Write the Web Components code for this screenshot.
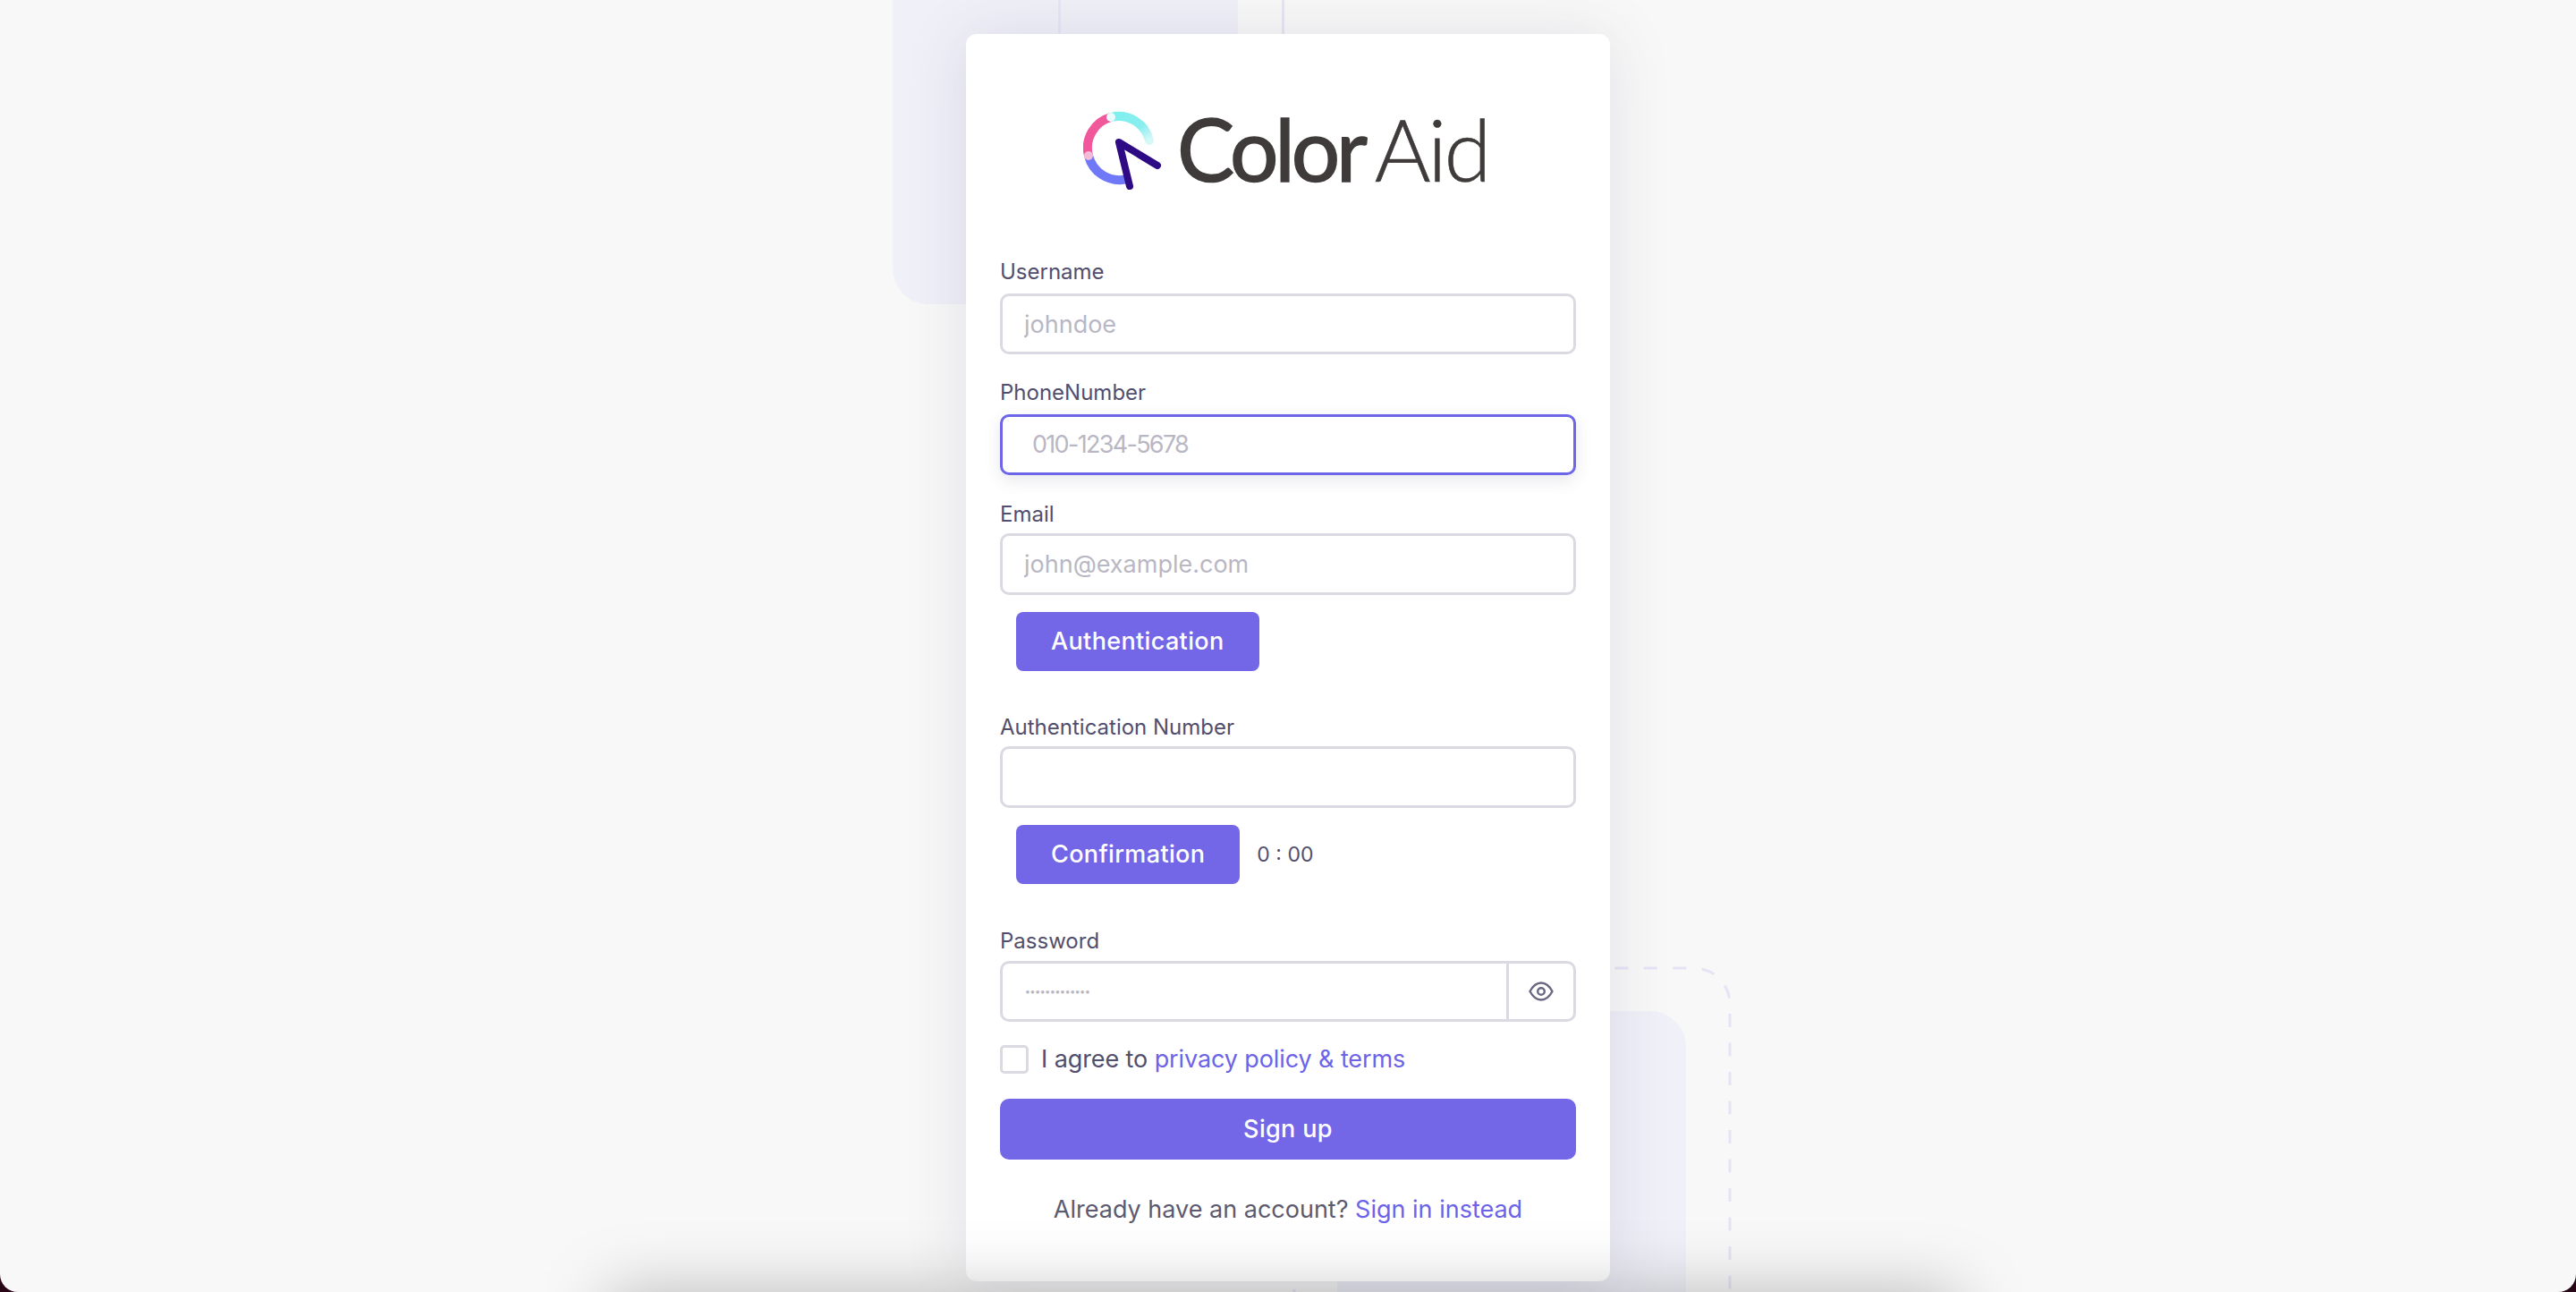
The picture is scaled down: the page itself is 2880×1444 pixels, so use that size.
<!DOCTYPE html>
<html lang="en">
<head>
<meta charset="utf-8">
<title>Color Aid - Sign up</title>
<style>
  html, body { margin: 0; height: 100%; overflow: hidden; background: #2a0716; }
</style>
</head>
<body>
<signup-page>
  <signup-card>
    <brand-logo></brand-logo>
    <text-field label="Username" placeholder="johndoe" style="margin-bottom: 27.5px"></text-field>
    <text-field label="PhoneNumber" placeholder="010-1234-5678" focused style="--placeholder-spacing: -1.7px"></text-field>
    <text-field label="Email" placeholder="john@example.com" style="--label-gap: 6px; --input-height: 69px; margin-bottom: 25.5px"></text-field>
    <action-row><action-button>Authentication</action-button></action-row>
    <text-field class="after-row" label="Authentication Number" style="--label-gap: 6px; --input-height: 69px; margin-bottom: 25.5px"></text-field>
    <action-row timer="0 : 00"><action-button>Confirmation</action-button></action-row>
    <password-field class="after-row-wide" label="Password" placeholder="·············" style="--label-gap: 7.5px"></password-field>
    <agree-check>I agree to <a href="#">privacy policy &amp; terms</a></agree-check>
    <action-button block>Sign up</action-button>
    <signin-note>Already have an account? <a href="#">Sign in instead</a></signin-note>
  </signup-card>
</signup-page>

<script>
const fieldStyles = `
  :host { padding-top: calc(9px - var(--label-gap, 9px)); }
  label { display: block; font-size: 24px; line-height: 30px; color: #524e6e; margin-bottom: var(--label-gap, 9px); }
  input { display: block; width: 100%; box-sizing: border-box; height: var(--input-height, 68px); padding: 0 24px;
    border: 3px solid #dbdae2; border-radius: 10px; outline: none; background: #fff;
    font: 400 27px Inter, sans-serif; color: #524e6e; }
  input::placeholder { color: #b9b7c4; opacity: 1; letter-spacing: var(--placeholder-spacing, 0); }
`;

class SignupPage extends HTMLElement {
  constructor() {
    super();
    this.attachShadow({ mode: 'open' }).innerHTML = `
      <style>
        :host { display: block; position: relative; height: 100vh; overflow: hidden; background: #f8f8f8;
          border-radius: 0 0 20px 20px; font-family: Inter, sans-serif; }
        .main { position: relative; display: flex; justify-content: center; padding-top: 38px; }
        .solid, .lines { position: absolute; box-sizing: border-box; border-radius: 40px; }
        .solid { background: #f0f0f8; }
        .top-solid { left: 998px; top: -200px; width: 386px; height: 540px; }
        .top-lines { left: 1183px; top: -300px; width: 253px; height: 500px; border: 3px solid #e6e5f6; }
        .bottom-solid { left: 1495px; top: 1130px; width: 390px; height: 500px; }
        .bottom-dashes { position: absolute; left: 1440px; top: 1070px; width: 500px; height: 374px; }
        .bottom-dashes path { fill: none; stroke: #e5e4f5; stroke-width: 3; stroke-dasharray: 15 17.5; }
        .bottom-shade { position: absolute; left: 680px; right: 690px; top: 1446px; height: 100px;
          background: rgba(0,0,0,.26); filter: blur(38px); pointer-events: none; }
      </style>
      <div class="solid top-solid"></div>
      <div class="lines top-lines"></div>
      <div class="solid bottom-solid"></div>
      <svg class="bottom-dashes" viewBox="0 0 500 374">
        <path d="M494 63V374"/>
        <path d="M494 63V52A40 40 0 0 0 454 12H47A40 40 0 0 0 7 52V374" stroke-dashoffset="-17.5"/>
      </svg>
      <div class="main"><slot></slot></div>
      <div class="bottom-shade"></div>
    `;
  }
}

class SignupCard extends HTMLElement {
  constructor() {
    super();
    this.attachShadow({ mode: 'open' }).innerHTML = `
      <style>
        :host { display: block; box-sizing: border-box; width: 720px; height: 1394px; padding: 0 38px;
          background: #fff; border-radius: 12px; box-shadow: 0 4px 70px rgba(67,64,100,.13); }
        ::slotted(.after-row) { margin-top: 45px; }
        ::slotted(.after-row-wide) { margin-top: 47px; }
      </style>
      <slot></slot>
    `;
  }
}

class BrandLogo extends HTMLElement {
  constructor() {
    super();
    this.attachShadow({ mode: 'open' }).innerHTML = `
      <style>
        :host { display: flex; align-items: flex-start; box-sizing: border-box; height: 251px; padding: 86px 0 0 93px; gap: 15px; }
        svg { width: 90px; height: 90px; flex: none; }
        .name { margin-top: -6px; font-family: Lato, sans-serif; font-size: 96px; line-height: 96px; color: #3f3b3a; white-space: nowrap; }
        .name b { font-weight: 400; letter-spacing: -4.2px; -webkit-text-stroke: 1.5px #3f3b3a; }
        .name span { font-weight: 300; letter-spacing: -3px; margin-left: 12px; -webkit-text-stroke: .6px #3f3b3a; }
      </style>
      <svg viewBox="0 0 90 90" fill="none" stroke-width="10">
        <defs>
          <linearGradient id="teal" x1="0" y1="0" x2="1" y2="1">
            <stop offset="0" stop-color="#7fefee"/><stop offset=".6" stop-color="#8aeeee"/><stop offset="1" stop-color="#d8f8f8"/>
          </linearGradient>
        </defs>
        <path d="M31 7A35.500 35.500 0 0 1 74 33" stroke="url(#teal)" stroke-linecap="round"/>
        <path d="M31 7A35.500 35.500 0 0 0 6 50" stroke="#f0589b"/>
        <path d="M6 50A35.500 35.500 0 0 0 47 76.500" stroke="#6f78f7"/>
        <circle cx="31" cy="7" r="5" fill="#e9fbfc"/>
        <circle cx="6" cy="50" r="5" fill="#f2bcd8"/>
        <path d="M52 84L40 35L83 61" stroke="#2f0a85" stroke-width="8" stroke-linecap="round" stroke-linejoin="round"/>
      </svg>
      <div class="name"><b>Color</b><span>Aid</span></div>
    `;
  }
}

class TextField extends HTMLElement {
  constructor() {
    super();
    const focused = this.hasAttribute('focused');
    this.attachShadow({ mode: 'open' }).innerHTML = `
      <style>
        :host { display: block; margin-bottom: 26.5px; }
        ${fieldStyles}
        input.focused { border-color: #6e66e8; padding-left: 33px; box-shadow: 0 6px 18px rgba(67,64,100,.12); }
      </style>
      <label></label>
      <input type="text" class="${focused ? 'focused' : ''}">
    `;
    this.shadowRoot.querySelector('label').textContent = this.getAttribute('label');
    this.shadowRoot.querySelector('input').placeholder = this.getAttribute('placeholder') || '';
  }
}

class PasswordField extends HTMLElement {
  constructor() {
    super();
    this.attachShadow({ mode: 'open' }).innerHTML = `
      <style>
        :host { display: block; margin-bottom: 26px; --placeholder-spacing: -2.2px; }
        ${fieldStyles}
        .group { display: flex; }
        input { flex: 1; min-width: 0; border-right: 0; border-radius: 10px 0 0 10px; }
        .eye { display: flex; align-items: center; justify-content: center; width: 78px; height: 68px; box-sizing: border-box;
          border: 3px solid #dbdae2; border-radius: 0 10px 10px 0; }
        svg { width: 30px; height: 30px; }
      </style>
      <label></label>
      <div class="group">
        <input type="text">
        <span class="eye">
          <svg viewBox="0 0 30 30" fill="none" stroke="#6a6780" stroke-width="2.400">
            <path d="M2.500 15C6 8.500 10 5.500 15 5.500S24 8.500 27.500 15C24 21.500 20 24.500 15 24.500S6 21.500 2.500 15Z" stroke-linejoin="round"/>
            <circle cx="15" cy="15" r="3.800"/>
          </svg>
        </span>
      </div>
    `;
    this.shadowRoot.querySelector('label').textContent = this.getAttribute('label');
    this.shadowRoot.querySelector('input').placeholder = this.getAttribute('placeholder') || '';
  }
}

class ActionRow extends HTMLElement {
  constructor() {
    super();
    const timer = this.getAttribute('timer');
    this.attachShadow({ mode: 'open' }).innerHTML = `
      <style>
        :host { display: flex; align-items: center; gap: 19px; margin: -6.5px 0 0 18px; }
        span { font-size: 23px; color: #524e6e; }
      </style>
      <slot></slot>
      ${timer ? `<span>${timer}</span>` : ''}
    `;
  }
}

class ActionButton extends HTMLElement {
  constructor() {
    super();
    this.attachShadow({ mode: 'open' }).innerHTML = `
      <style>
        :host { display: inline-block; }
        :host([block]) { display: block; }
        button { display: block; width: 100%; height: 66px; padding: 0 39px 2px; border: 0; border-radius: 8px; background: #7367e8;
          color: #fff; font: 500 27px Inter, sans-serif; letter-spacing: .35px; }
        :host([block]) button { height: 68px; border-radius: 10px; }
      </style>
      <button type="button"><slot></slot></button>
    `;
  }
}

class AgreeCheck extends HTMLElement {
  constructor() {
    super();
    this.attachShadow({ mode: 'open' }).innerHTML = `
      <style>
        :host { display: flex; align-items: center; gap: 14px; height: 32px; margin-bottom: 28px; font-size: 27px; letter-spacing: -.1px; color: #524e6e; }
        i { display: block; box-sizing: border-box; width: 32px; height: 32px; border: 3px solid #dbdae2; border-radius: 5px; }
        div { padding-bottom: 2px; }
        ::slotted(a) { color: #6c63e8; text-decoration: none; }
      </style>
      <i></i>
      <div><slot></slot></div>
    `;
  }
}

class SigninNote extends HTMLElement {
  constructor() {
    super();
    this.attachShadow({ mode: 'open' }).innerHTML = `
      <style>
        :host { display: block; margin-top: 38px; text-align: center; font-size: 27px; line-height: 36px; color: #5d5a70; }
        ::slotted(a) { color: #6c63e8; text-decoration: none; }
      </style>
      <slot></slot>
    `;
  }
}

customElements.define('signup-page', SignupPage);
customElements.define('signup-card', SignupCard);
customElements.define('brand-logo', BrandLogo);
customElements.define('text-field', TextField);
customElements.define('password-field', PasswordField);
customElements.define('action-row', ActionRow);
customElements.define('action-button', ActionButton);
customElements.define('agree-check', AgreeCheck);
customElements.define('signin-note', SigninNote);
</script>
</body>
</html>
